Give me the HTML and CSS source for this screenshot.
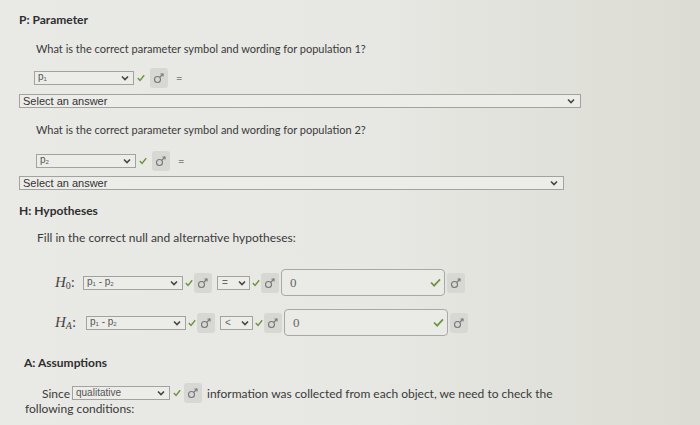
FILE: index.html
```html
<!DOCTYPE html>
<html>
<head>
<meta charset="utf-8">
<link rel="stylesheet" href="styles.css">
</head>
<body>
<div class="page">
  <div class="sec-title t-p">P: Parameter</div>
  <div class="question q1">What is the correct parameter symbol and wording for population 1?</div>
  <div class="row row-p1">
    <div class="sel sel-small"><span class="sel-val">p<sub>1</sub></span><svg class="chev" width="8" height="6" viewBox="0 0 8 6"><polyline points="1,1.5 4,4.5 7,1.5" fill="none" stroke="#444" stroke-width="1.6"/></svg></div>
    <svg class="check" width="8" height="8" viewBox="0 0 10 9"><polyline points="1,4.5 3.8,7.5 9,1" fill="none" stroke="#6f9440" stroke-width="1.8"/></svg>
    <span class="ibtn"><svg width="12" height="12" viewBox="0 0 12 12"><circle cx="4.5" cy="7.5" r="3" fill="none" stroke="#777" stroke-width="1.1"/><polyline points="6.7,5.3 10,2" fill="none" stroke="#777" stroke-width="1.1"/><polyline points="7.5,2 10,2 10,4.5" fill="none" stroke="#777" stroke-width="1.1"/></svg></span>
    <span class="eq">=</span>
  </div>
  <div class="sel sel-wide w1"><span class="sel-text">Select an answer</span><svg class="chev" width="8" height="6" viewBox="0 0 8 6"><polyline points="1,1.5 4,4.5 7,1.5" fill="none" stroke="#444" stroke-width="1.6"/></svg></div>

  <div class="question q2">What is the correct parameter symbol and wording for population 2?</div>
  <div class="row row-p2">
    <div class="sel sel-small"><span class="sel-val">p<sub>2</sub></span><svg class="chev" width="8" height="6" viewBox="0 0 8 6"><polyline points="1,1.5 4,4.5 7,1.5" fill="none" stroke="#444" stroke-width="1.6"/></svg></div>
    <svg class="check" width="8" height="8" viewBox="0 0 10 9"><polyline points="1,4.5 3.8,7.5 9,1" fill="none" stroke="#6f9440" stroke-width="1.8"/></svg>
    <span class="ibtn"><svg width="12" height="12" viewBox="0 0 12 12"><circle cx="4.5" cy="7.5" r="3" fill="none" stroke="#777" stroke-width="1.1"/><polyline points="6.7,5.3 10,2" fill="none" stroke="#777" stroke-width="1.1"/><polyline points="7.5,2 10,2 10,4.5" fill="none" stroke="#777" stroke-width="1.1"/></svg></span>
    <span class="eq">=</span>
  </div>
  <div class="sel sel-wide w2"><span class="sel-text">Select an answer</span><svg class="chev" width="8" height="6" viewBox="0 0 8 6"><polyline points="1,1.5 4,4.5 7,1.5" fill="none" stroke="#444" stroke-width="1.6"/></svg></div>

  <div class="sec-title t-h">H: Hypotheses</div>
  <div class="question q3">Fill in the correct null and alternative hypotheses:</div>

  <div class="row hyp h0">
    <span class="hlabel"><i>H</i><span class="hsub">0</span>:</span>
    <div class="sel sel-small"><span class="sel-val">p<sub>1</sub> - p<sub>2</sub></span><svg class="chev" width="8" height="6" viewBox="0 0 8 6"><polyline points="1,1.5 4,4.5 7,1.5" fill="none" stroke="#444" stroke-width="1.6"/></svg></div>
    <svg class="check" width="8" height="8" viewBox="0 0 10 9"><polyline points="1,4.5 3.8,7.5 9,1" fill="none" stroke="#6f9440" stroke-width="1.8"/></svg>
    <span class="ibtn"><svg width="12" height="12" viewBox="0 0 12 12"><circle cx="4.5" cy="7.5" r="3" fill="none" stroke="#777" stroke-width="1.1"/><polyline points="6.7,5.3 10,2" fill="none" stroke="#777" stroke-width="1.1"/><polyline points="7.5,2 10,2 10,4.5" fill="none" stroke="#777" stroke-width="1.1"/></svg></span>
    <div class="sel sel-op"><span class="op">=</span><svg class="chev" width="8" height="6" viewBox="0 0 8 6"><polyline points="1,1.5 4,4.5 7,1.5" fill="none" stroke="#444" stroke-width="1.6"/></svg></div>
    <svg class="check" width="8" height="8" viewBox="0 0 10 9"><polyline points="1,4.5 3.8,7.5 9,1" fill="none" stroke="#6f9440" stroke-width="1.8"/></svg>
    <span class="ibtn"><svg width="12" height="12" viewBox="0 0 12 12"><circle cx="4.5" cy="7.5" r="3" fill="none" stroke="#777" stroke-width="1.1"/><polyline points="6.7,5.3 10,2" fill="none" stroke="#777" stroke-width="1.1"/><polyline points="7.5,2 10,2 10,4.5" fill="none" stroke="#777" stroke-width="1.1"/></svg></span>
    <div class="tin"><span class="tval">0</span><svg class="tcheck" width="11" height="9" viewBox="0 0 12 10"><polyline points="1,5 4.5,8.5 11,1.5" fill="none" stroke="#6f9440" stroke-width="1.9"/></svg></div>
    <span class="ibtn"><svg width="12" height="12" viewBox="0 0 12 12"><circle cx="4.5" cy="7.5" r="3" fill="none" stroke="#777" stroke-width="1.1"/><polyline points="6.7,5.3 10,2" fill="none" stroke="#777" stroke-width="1.1"/><polyline points="7.5,2 10,2 10,4.5" fill="none" stroke="#777" stroke-width="1.1"/></svg></span>
  </div>

  <div class="row hyp ha">
    <span class="hlabel"><i>H</i><span class="hsub"><i>A</i></span>:</span>
    <div class="sel sel-small"><span class="sel-val">p<sub>1</sub> - p<sub>2</sub></span><svg class="chev" width="8" height="6" viewBox="0 0 8 6"><polyline points="1,1.5 4,4.5 7,1.5" fill="none" stroke="#444" stroke-width="1.6"/></svg></div>
    <svg class="check" width="8" height="8" viewBox="0 0 10 9"><polyline points="1,4.5 3.8,7.5 9,1" fill="none" stroke="#6f9440" stroke-width="1.8"/></svg>
    <span class="ibtn"><svg width="12" height="12" viewBox="0 0 12 12"><circle cx="4.5" cy="7.5" r="3" fill="none" stroke="#777" stroke-width="1.1"/><polyline points="6.7,5.3 10,2" fill="none" stroke="#777" stroke-width="1.1"/><polyline points="7.5,2 10,2 10,4.5" fill="none" stroke="#777" stroke-width="1.1"/></svg></span>
    <div class="sel sel-op"><span class="op">&lt;</span><svg class="chev" width="8" height="6" viewBox="0 0 8 6"><polyline points="1,1.5 4,4.5 7,1.5" fill="none" stroke="#444" stroke-width="1.6"/></svg></div>
    <svg class="check" width="8" height="8" viewBox="0 0 10 9"><polyline points="1,4.5 3.8,7.5 9,1" fill="none" stroke="#6f9440" stroke-width="1.8"/></svg>
    <span class="ibtn"><svg width="12" height="12" viewBox="0 0 12 12"><circle cx="4.5" cy="7.5" r="3" fill="none" stroke="#777" stroke-width="1.1"/><polyline points="6.7,5.3 10,2" fill="none" stroke="#777" stroke-width="1.1"/><polyline points="7.5,2 10,2 10,4.5" fill="none" stroke="#777" stroke-width="1.1"/></svg></span>
    <div class="tin"><span class="tval">0</span><svg class="tcheck" width="11" height="9" viewBox="0 0 12 10"><polyline points="1,5 4.5,8.5 11,1.5" fill="none" stroke="#6f9440" stroke-width="1.9"/></svg></div>
    <span class="ibtn"><svg width="12" height="12" viewBox="0 0 12 12"><circle cx="4.5" cy="7.5" r="3" fill="none" stroke="#777" stroke-width="1.1"/><polyline points="6.7,5.3 10,2" fill="none" stroke="#777" stroke-width="1.1"/><polyline points="7.5,2 10,2 10,4.5" fill="none" stroke="#777" stroke-width="1.1"/></svg></span>
  </div>

  <div class="sec-title t-a">A: Assumptions</div>
  <div class="row since">
    <span class="txt">Since</span>
    <div class="sel sel-small sel-q"><span class="sel-val">qualitative</span><svg class="chev" width="8" height="6" viewBox="0 0 8 6"><polyline points="1,1.5 4,4.5 7,1.5" fill="none" stroke="#444" stroke-width="1.6"/></svg></div>
    <svg class="check" width="8" height="8" viewBox="0 0 10 9"><polyline points="1,4.5 3.8,7.5 9,1" fill="none" stroke="#6f9440" stroke-width="1.8"/></svg>
    <span class="ibtn"><svg width="12" height="12" viewBox="0 0 12 12"><circle cx="4.5" cy="7.5" r="3" fill="none" stroke="#777" stroke-width="1.1"/><polyline points="6.7,5.3 10,2" fill="none" stroke="#777" stroke-width="1.1"/><polyline points="7.5,2 10,2 10,4.5" fill="none" stroke="#777" stroke-width="1.1"/></svg></span>
    <span class="txt">information was collected from each object, we need to check the</span>
  </div>
  <div class="following">following conditions:</div>
</div>
</body>
</html>
```

FILE: styles.css
```css
html, body {
  margin: 0;
  padding: 0;
}
body {
  width: 700px;
  height: 425px;
  overflow: hidden;
  background: linear-gradient(90deg, #e9e9e6 0%, #e7e7e3 55%, #dcdcd4 100%);
  font-family: Lato, "Open Sans", sans-serif;
  color: #333;
}
.page {
  padding: 12px 0 0 19px;
}
.sec-title {
  font-weight: bold;
  font-size: 12px;
  line-height: 16px;
  height: 16px;
  color: #2e2e2e;
}
.question {
  font-size: 11px;
  line-height: 16px;
  height: 16px;
  margin-left: 17px;
  color: #3a3a3a;
}
.q1 { margin-top: 13px; }
.q2 { margin-top: 14px; }
.t-h { margin-top: 13px; }
.q3 { margin-top: 11px; margin-left: 18px; font-size: 12px; }
.t-a { margin-top: 19px; margin-left: 5px; }

.row {
  display: flex;
  align-items: center;
}
.row-p1 { margin-top: 10px; margin-left: 15px; height: 21px; }
.row-p2 { margin-top: 12px; margin-left: 17px; height: 21px; }

.sel {
  box-sizing: border-box;
  display: flex;
  align-items: center;
  justify-content: space-between;
  border: 1px solid #a2a29e;
  background: #ecece9;
  padding: 0 4px 0 3px;
}
.sel-small {
  width: 100px;
  height: 14px;
}
.sel-val {
  font-family: "Liberation Sans", Arial, sans-serif;
  font-size: 10px;
  color: #555;
  line-height: 12px;
}
.sel-val sub {
  font-size: 6px;
  vertical-align: -1px;
}
.chev { flex: none; }
.check { flex: none; margin: 0 1px 0 2px; }
.row-p1 .check, .row-p2 .check { margin: 0 5px 0 3px; }
.ibtn {
  width: 18px;
  height: 20px;
  border-radius: 3px;
  background: #d7d7d3;
  display: flex;
  align-items: center;
  justify-content: center;
  flex: none;
}
.eq {
  margin-left: 8px;
  font-size: 11px;
  color: #888;
}
.sel-wide {
  height: 14px;
  margin-top: 6px;
  padding: 0 5px 0 3px;
}
.w1 { width: 562px; }
.w2 { width: 545px; margin-top: 5px; }
.sel-text {
  font-family: "Liberation Sans", Arial, sans-serif;
  font-size: 11px;
  color: #333;
  line-height: 12px;
}

.hyp { height: 27px; margin-left: 36px; }
.h0 { margin-top: 23px; }
.ha { margin-top: 13px; }
.hlabel {
  font-family: "Liberation Serif", "DejaVu Serif", serif;
  font-size: 15px;
  color: #444;
  width: 28px;
  flex: none;
}
.hsub {
  font-size: 10px;
  vertical-align: -2px;
}
.ha .hlabel { width: 31px; }
.sel-op {
  width: 33px;
  height: 14px;
  margin-left: 5px;
  padding: 0 3px 0 4px;
}
.op {
  font-family: "Liberation Sans", Arial, sans-serif;
  font-size: 10px;
  color: #666;
}
.tin {
  box-sizing: border-box;
  width: 164px;
  height: 27px;
  margin-left: 2px;
  border: 1px solid #a8a8a4;
  border-radius: 4px;
  background: #eaeae7;
  display: flex;
  align-items: center;
  justify-content: space-between;
  padding: 0 3px 0 8px;
}
.tcheck { flex: none; }
.tval {
  font-family: "Liberation Serif", serif;
  font-size: 13px;
  color: #666;
}
.tin + .ibtn { margin-left: 2px; }

.since {
  height: 16px;
  margin-top: 14px;
  margin-left: 23px;
  font-size: 12px;
}
.txt { color: #3a3a3a; }
.sel-q { width: 98px; margin-left: 2px; }
.since .check { margin: 0 3px 0 3px; }
.since .ibtn { margin-left: 0; margin-right: 5px; }
.following {
  margin-top: 0;
  margin-left: 6px;
  font-size: 12px;
  line-height: 15px;
  color: #3a3a3a;
}
```
